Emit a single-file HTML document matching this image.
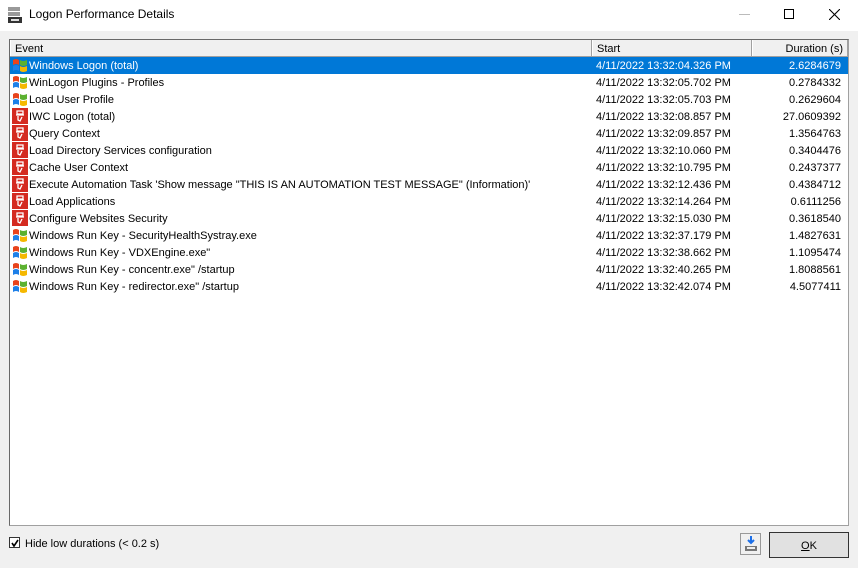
<!DOCTYPE html>
<html><head><style>
*{margin:0;padding:0;box-sizing:border-box}
body{width:858px;height:568px;background:#f0f0f0;font-family:"Liberation Sans",sans-serif;font-size:11px;color:#000;position:relative;overflow:hidden}
.title{position:absolute;left:0;top:0;width:858px;height:31px;background:#fff}
.title .t{position:absolute;left:29px;top:7px;font-size:12px}
.list{position:absolute;left:9px;top:39px;width:840px;height:487px;background:#fff;border:1px solid #a0a0a0;border-top-color:#696969;border-left-color:#696969}
.hdr{position:absolute;left:0;top:0;height:17px;width:838px;background:#f0f0f0;border-bottom:1px solid #a0a0a0}
.hdr div{position:absolute;top:0;height:16px;line-height:18px;border-right:1px solid #a0a0a0;border-left:1px solid #fff;padding:0 4px}
.row{position:absolute;left:0;height:17px;width:838px;line-height:19px}
.row span{position:absolute;white-space:nowrap}
.sel{background:#0078d7;color:#fff}
.c1{left:19px}.c2{left:586px}.c3{right:7px}
.ic{position:absolute;left:2px;top:0;width:16px;height:16px}
</style></head><body>
<div class="title">
<svg style="position:absolute;left:7px;top:6px" width="16" height="18"><rect x="1" y="1" width="12" height="4" fill="#999"/><rect x="1" y="6" width="12" height="4" fill="#999"/><rect x="1" y="11" width="14" height="6" fill="#333"/><rect x="4" y="13" width="8" height="2" fill="#ddd"/></svg>
<div class="t">Logon Performance Details</div>
<div style="position:absolute;left:739px;top:14px;width:11px;height:1px;background:#bbb"></div>
<div style="position:absolute;left:784px;top:9px;width:10px;height:10px;border:1px solid #000"></div>
<svg style="position:absolute;left:829px;top:9px" width="11" height="11"><path d="M0 0L11 11M11 0L0 11" stroke="#000" stroke-width="1.1"/></svg>
</div>
<div class="list">
<div class="hdr">
<div style="left:0;width:582px">Event</div>
<div style="left:582px;width:160px">Start</div>
<div style="left:742px;width:96px;text-align:right">Duration (s)</div>
</div>
<div id="rows"></div>
</div>
<script>
var d=[["w","Windows Logon (total)","4/11/2022 13:32:04.326 PM","2.6284679"],
["w","WinLogon Plugins - Profiles","4/11/2022 13:32:05.702 PM","0.2784332"],
["w","Load User Profile","4/11/2022 13:32:05.703 PM","0.2629604"],
["r","IWC Logon (total)","4/11/2022 13:32:08.857 PM","27.0609392"],
["r","Query Context","4/11/2022 13:32:09.857 PM","1.3564763"],
["r","Load Directory Services configuration","4/11/2022 13:32:10.060 PM","0.3404476"],
["r","Cache User Context","4/11/2022 13:32:10.795 PM","0.2437377"],
["r","Execute Automation Task 'Show message \"THIS IS AN AUTOMATION TEST MESSAGE\" (Information)'","4/11/2022 13:32:12.436 PM","0.4384712"],
["r","Load Applications","4/11/2022 13:32:14.264 PM","0.6111256"],
["r","Configure Websites Security","4/11/2022 13:32:15.030 PM","0.3618540"],
["w","Windows Run Key - SecurityHealthSystray.exe","4/11/2022 13:32:37.179 PM","1.4827631"],
["w","Windows Run Key - VDXEngine.exe\"","4/11/2022 13:32:38.662 PM","1.1095474"],
["w","Windows Run Key - concentr.exe\" /startup","4/11/2022 13:32:40.265 PM","1.8088561"],
["w","Windows Run Key - redirector.exe\" /startup","4/11/2022 13:32:42.074 PM","4.5077411"]];
var h="";
d.forEach(function(r,i){
var ic=r[0]=="w"?'<svg class="ic" viewBox="0 0 16 16"><path d="M1 3Q4 1 7 3L7 8Q4 6 1 8Z" fill="#e8431c"/><path d="M8 3Q11 5 15 3L15 8Q11 10 8 8Z" fill="#5cb130"/><path d="M1 9Q4 7 7 9L7 14Q4 12 1 14Z" fill="#1c7fe8"/><path d="M8 9Q11 11 15 9L15 14Q11 16 8 14Z" fill="#f5b800"/></svg>':'<svg class="ic" viewBox="0 0 16 16"><rect x="0" y="0" width="16" height="16" fill="#d42a20"/><path d="M5 3H11V6H5ZM4 7H12M6 8V12L8 13L10 9" stroke="#fff" stroke-width="1.3" fill="none"/></svg>';
h+='<div class="row'+(i==0?' sel':'')+'" style="top:'+(17+i*17)+'px">'+ic+'<span class="c1">'+r[1].replace(/</g,"&lt;")+'</span><span class="c2">'+r[2]+'</span><span class="c3">'+r[3]+'</span></div>';});
document.getElementById("rows").innerHTML=h;
</script>
<div style="position:absolute;left:9px;top:537px;width:11px;height:11px;border:1px solid #333;background:#fff"></div>
<svg style="position:absolute;left:10px;top:538px" width="10" height="10"><path d="M2 5L4 8L8 2" stroke="#000" stroke-width="1.6" fill="none"/></svg>
<div style="position:absolute;left:25px;top:538px;font-size:11px">Hide low durations (&lt; 0.2 s)</div>
<div style="position:absolute;left:740px;top:533px;width:21px;height:22px;border:1px solid #999;background:#f0f0f0"></div>
<svg style="position:absolute;left:744px;top:535px" width="14" height="18"><path d="M7 1V7M4 5L7 8L10 5" stroke="#1c6fe8" stroke-width="2" fill="none"/><rect x="1" y="11" width="12" height="5" fill="#777"/><rect x="3" y="12" width="8" height="2" fill="#eee"/></svg>
<div style="position:absolute;left:769px;top:532px;width:80px;height:26px;border:1px solid #333;background:#e1e1e1;text-align:center;line-height:26px;font-size:11px"><u>O</u>K</div>
</body></html>
